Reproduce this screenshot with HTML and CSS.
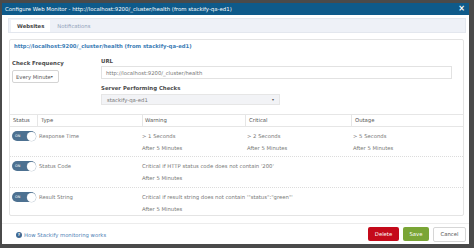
FILE: index.html
```html
<!DOCTYPE html>
<html>
<head>
<meta charset="utf-8">
<link rel="stylesheet" href="styles.css">
</head>
<body>
<div class="dialog">
  <div class="titlebar">
    <span class="title">Configure Web Monitor - http://localhost:9200/_cluster/health (from stackify-qa-ed1)</span>
    <span class="close">×</span>
  </div>
  <div class="content">
    <div class="tabs">
      <div class="tab active">Websites</div>
      <div class="tab">Notifications</div>
    </div>
    <div class="panel">
      <div class="heading">http://localhost:9200/_cluster/health (from stackify-qa-ed1)</div>
      <div class="form">
        <div class="col1">
          <div class="label">Check Frequency</div>
          <div class="btn-dd">Every Minute<span class="caret">▾</span></div>
        </div>
        <div class="col2">
          <div class="label">URL</div>
          <div class="input">http://localhost:9200/_cluster/health</div>
          <div class="label label-2">Server Performing Checks</div>
          <div class="select"><span>stackify-qa-ed1</span><span class="caret">▾</span></div>
        </div>
      </div>
      <div class="grid">
        <div class="row head">
          <div class="hc">Status</div>
          <div class="hc">Type</div>
          <div class="hc">Warning</div>
          <div class="hc">Critical</div>
          <div class="hc last">Outage</div>
        </div>
        <div class="row body">
          <div class="cell"><span class="toggle"><span class="on">ON</span><span class="knob"></span></span></div>
          <div class="cell type">Response Time</div>
          <div class="cell val w"><div>&gt; 1 Seconds</div><div>After 5 Minutes</div></div>
          <div class="cell val c"><div>&gt; 2 Seconds</div><div>After 5 Minutes</div></div>
          <div class="cell val o"><div>&gt; 5 Seconds</div><div>After 5 Minutes</div></div>
        </div>
        <div class="row body">
          <div class="cell"><span class="toggle"><span class="on">ON</span><span class="knob"></span></span></div>
          <div class="cell type">Status Code</div>
          <div class="cell val w span3"><div>Critical if HTTP status code does not contain '200'</div><div>After 5 Minutes</div></div>
        </div>
        <div class="row body lastrow">
          <div class="cell"><span class="toggle"><span class="on">ON</span><span class="knob"></span></span></div>
          <div class="cell type">Result String</div>
          <div class="cell val w span3"><div>Critical if result string does not contain '"status":"green"'</div><div>After 5 Minutes</div></div>
        </div>
      </div>
    </div>
  </div>
  <div class="footer">
    <div class="help"><span class="qicon">?</span>How Stackify monitoring works</div>
    <div class="buttons">
      <div class="btn delete">Delete</div>
      <div class="btn save">Save</div>
      <div class="btn cancel">Cancel</div>
    </div>
  </div>
</div>
</body>
</html>
```
FILE: styles.css
```css
html, body {
  margin: 0;
  padding: 0;
}
body {
  background: #4a4a4a;
  width: 474px;
  height: 248px;
  overflow: hidden;
  font-family: "DejaVu Sans", Verdana, sans-serif;
  font-size: 5.3px;
  color: #666;
}
.dialog {
  margin: 3px 0 0 2px;
  width: 467px;
  height: 241px;
  background: #fff;
  display: flex;
  flex-direction: column;
}
.titlebar {
  height: 12px;
  background: #0e5a8a;
  color: #fff;
  display: flex;
  align-items: center;
  justify-content: space-between;
  padding: 0 4px 0 3px;
  font-size: 5.4px;
}
.close {
  font-weight: bold;
  font-size: 8px;
  line-height: 8px;
}
.content {
  padding: 3px 3px 0 6px;
}
.tabs {
  height: 15px;
  background: #eef1f7;
  border: 1px solid #e3e7ee;
  box-sizing: border-box;
  display: flex;
  align-items: flex-end;
  padding-left: 2px;
  gap: 1px;
}
.tab {
  height: 12px;
  line-height: 12px;
  padding: 0 6px;
  color: #8ea1b8;
}
.tab.active {
  background: #fff;
  color: #444;
  font-weight: bold;
}
.panel {
  margin: 6px 2px 0 1px;
  border: 1px solid #e4e4e4;
  border-radius: 2px;
  height: 177px;
  box-sizing: border-box;
}
.heading {
  color: #3b7cb5;
  font-weight: bold;
  padding: 2px 0 0 4px;
  line-height: 8px;
  height: 10px;
}
.form {
  display: flex;
  padding-left: 2px;
  height: 62px;
}
.col1 {
  width: 89px;
  padding-top: 7px;
}
.col2 {
  padding-top: 5px;
}
.label {
  font-weight: bold;
  color: #4a4a4a;
  font-size: 5.4px;
  line-height: 8px;
}
.label-2 {
  margin-top: 5px;
}
.btn-dd {
  margin-top: 3px;
  width: 47px;
  height: 13px;
  box-sizing: border-box;
  border: 1px solid #d4d4d4;
  border-radius: 2px;
  display: flex;
  align-items: center;
  padding-left: 3px;
  color: #555;
}
.caret {
  font-size: 4px;
}
.input {
  margin-top: 1px;
  width: 351px;
  height: 13px;
  box-sizing: border-box;
  border: 1px solid #e2e2e2;
  display: flex;
  align-items: center;
  padding-left: 4px;
  color: #777;
}
.select {
  margin-top: 2px;
  width: 179px;
  height: 11px;
  box-sizing: border-box;
  border: 1px solid #e6e6e6;
  background: #f2f3f6;
  display: flex;
  align-items: center;
  justify-content: space-between;
  padding: 0 5px 0 5px;
  color: #777;
}
.select .caret {
  color: #555;
}
.row {
  display: grid;
  grid-template-columns: 28px 105px 103px 106px 111px;
}
.head {
  border-top: 1px solid #e6e6e6;
  border-bottom: 1px solid #e6e6e6;
  height: 13px;
  box-sizing: border-box;
}
.hc {
  border-right: 1px solid #e6e6e6;
  padding-left: 3px;
  line-height: 11px;
  color: #555;
}
.hc:nth-child(3) { padding-left: 2px; }
.hc.last { border-right: none; }
.body {
  height: 30px;
  border-bottom: 1px dotted #dcdcdc;
  box-sizing: border-box;
  padding-top: 3px;
}
.body + .body { height: 31px; }
.body.lastrow { border-bottom: none; height: 30px; }
.cell {
  line-height: 12px;
}
.cell:first-child {
  padding-left: 2px;
  padding-top: 1px;
}
.type {
  padding-left: 1px;
  color: #777;
}
.val { color: #777; }
.val.w { margin-left: -1px; }
.val.c { padding-left: 1px; }
.val.o { padding-left: 1px; }
.span3 {
  grid-column: 3 / span 3;
}
.toggle {
  display: flex;
  align-items: center;
  justify-content: space-between;
  width: 24px;
  height: 10px;
  border-radius: 5px;
  background: #4d7191;
  box-sizing: border-box;
  padding: 0 0.5px 0 3px;
}
.on {
  color: #fff;
  font-size: 3.4px;
  line-height: 4px;
}
.knob {
  width: 9px;
  height: 9px;
  border-radius: 50%;
  background: #fff;
  box-shadow: 0 0 0 0.3px #9ab;
}
.footer {
  margin-top: 7px;
  border-top: 1px solid #ececec;
  display: flex;
  justify-content: space-between;
  align-items: center;
  padding: 3px 3px 0 14px;
  height: 18px;
  box-sizing: border-box;
}
.help {
  display: flex;
  align-items: center;
  color: #4f82b6;
  gap: 2px;
  padding-top: 1px;
}
.qicon {
  width: 6px;
  height: 6px;
  border-radius: 50%;
  background: #3e6892;
  color: #fff;
  font-size: 4px;
  font-weight: bold;
  display: flex;
  align-items: center;
  justify-content: center;
}
.buttons {
  display: flex;
  gap: 4px;
  align-items: center;
}
.btn {
  height: 14px;
  line-height: 14px;
  padding: 0 5px;
  border-radius: 2px;
  color: #fff;
  box-sizing: border-box;
}
.delete { background: #c40a1a; width: 31px; text-align: center; }
.save { background: #7aa536; width: 26px; text-align: center; }
.cancel {
  background: #fff;
  color: #555;
  border: 1px solid #d6d6d6;
  height: 15px;
  line-height: 13px;
  width: 33px;
  text-align: center;
}
```
